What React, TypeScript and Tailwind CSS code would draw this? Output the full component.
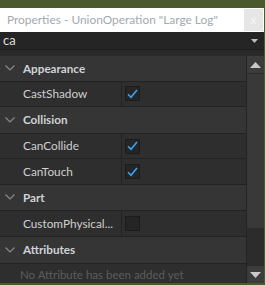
import { FC } from "react";

type Row =
  | { kind: "header"; label: string; h: string }
  | { kind: "prop"; label: string; checked: boolean; h: string };

const rows: Row[] = [
  { kind: "header", label: "Appearance", h: "h-[26px]" },
  { kind: "prop", label: "CastShadow", checked: true, h: "h-[26px]" },
  { kind: "header", label: "Collision", h: "h-[27px]" },
  { kind: "prop", label: "CanCollide", checked: true, h: "h-[26px]" },
  { kind: "prop", label: "CanTouch", checked: true, h: "h-[26px]" },
  { kind: "header", label: "Part", h: "h-[26px]" },
  { kind: "prop", label: "CustomPhysical...", checked: false, h: "h-[27px]" },
  { kind: "header", label: "Attributes", h: "h-[27px]" },
];

const Chevron: FC = () => (
  <svg width="10" height="6" viewBox="0 0 10 6" className="ml-[5px] mr-[8px]">
    <path d="M0.5 0.5 L5 5 L9.5 0.5" fill="none" stroke="#8a8a8a" strokeWidth="1.2" />
  </svg>
);

const Check: FC<{ on: boolean }> = ({ on }) => (
  <div className="w-[15px] h-[15px] bg-[#252525] border border-[#1c1c1c] flex items-center justify-center">
    {on && (
      <svg width="11" height="10" viewBox="0 0 11 10">
        <path d="M1 5.2 L4 8.3 L10 1" fill="none" stroke="#3aa3f5" strokeWidth="1.6" />
      </svg>
    )}
  </div>
);

const Header: FC<{ label: string; h: string }> = ({ label, h }) => (
  <div className={`${h} flex items-center bg-[#353535] border-b border-[#232323]`}>
    <Chevron />
    <span className="text-[11.7px] font-bold text-[#cfd3d8]">{label}</span>
  </div>
);

const Prop: FC<{ label: string; checked: boolean; h: string }> = ({ label, checked, h }) => (
  <div className={`${h} flex bg-[#2e2e2e] border-b border-[#232323]`}>
    <div className="w-[122px] pl-[23px] flex items-center border-r border-[#232323] text-[11.8px] text-[#cfcfcf] whitespace-nowrap overflow-hidden">
      {label}
    </div>
    <div className="flex-1 flex items-center pl-[3px]">
      <Check on={checked} />
    </div>
  </div>
);

const Arrow: FC<{ down?: boolean }> = ({ down }) => (
  <div className="h-[17px] bg-[#3c3c3c] flex items-center justify-center">
    <svg width="11" height="6" viewBox="0 0 11 6">
      <path d={down ? "M0 0 L11 0 L5.5 6 Z" : "M0 6 L11 6 L5.5 0 Z"} fill="#c9c9c9" />
    </svg>
  </div>
);

export default function App() {
  return (
    <div className="w-[265px] h-[285px] bg-[#4b5a2c] pt-[8px] pb-[2px] overflow-hidden font-['Lato',sans-serif]">
      <div className="w-[264px] h-[275px] flex flex-col bg-[#2a2a2a]">
        <div className="h-[24px] bg-white flex items-center justify-between pl-[7px] pr-[1px]">
          <span className="text-[11.9px] text-[#a3a9af] whitespace-nowrap">
            Properties - UnionOperation "Large Log"
          </span>
          <div className="w-[19px] h-[22px] bg-[#e6e6e6] flex items-center justify-center text-[11px] text-[#f7f7f7]">
            x
          </div>
        </div>
        <div className="h-[18px] bg-[#252525] border-b border-[#1e1e1e] flex items-center justify-between pl-[3px] pr-[6px]">
          <span className="text-[13px] text-[#dedede]">ca</span>
          <svg width="7" height="4" viewBox="0 0 7 4">
            <path d="M0 0 L7 0 L3.5 4 Z" fill="#bdbdbd" />
          </svg>
        </div>
        <div className="h-[6px] bg-[#2a2a2a]" />
        <div className="flex flex-1 min-h-0">
          <div className="flex-1 flex flex-col border-r border-[#232323] overflow-hidden">
            {rows.map((r) =>
              r.kind === "header" ? (
                <Header key={r.label} label={r.label} h={r.h} />
              ) : (
                <Prop key={r.label} label={r.label} checked={r.checked} h={r.h} />
              )
            )}
            <div className="pl-[20px] bg-[#2e2e2e] flex-1 text-[11.5px] text-[#5c5c5c] whitespace-nowrap leading-[16px] pt-[3px]">
              No Attribute has been added yet
            </div>
          </div>
          <div className="w-[17px] flex flex-col bg-[#2c2c2c]">
            <Arrow />
            <div className="h-[154px] mt-[1px] bg-[#393939]" />
            <div className="flex-1" />
            <Arrow down />
          </div>
        </div>
      </div>
    </div>
  );
}
